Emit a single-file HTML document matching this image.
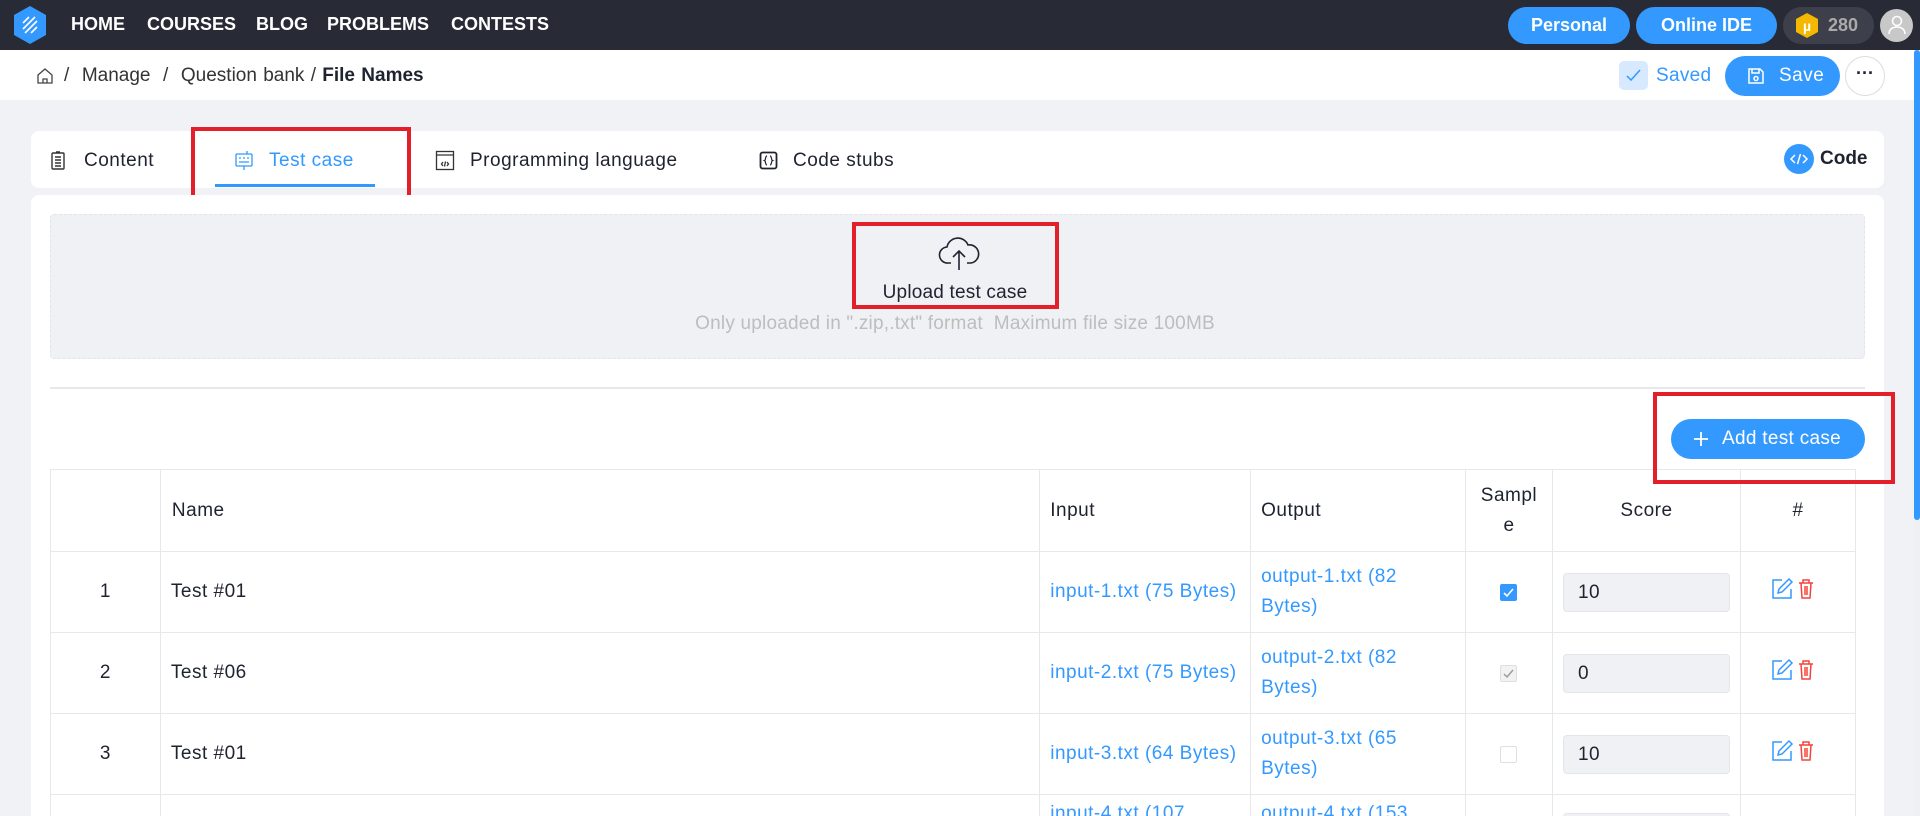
<!DOCTYPE html>
<html style="height:816px;overflow:hidden"><head><meta charset="utf-8"><style>
*{box-sizing:border-box;margin:0;padding:0}
body{width:1920px;height:816px;overflow:hidden;background:#f0f2f5;font-family:"Liberation Sans",sans-serif;font-size:19px;letter-spacing:0.5px;color:#1f2330;position:relative}
.a{position:absolute}
.nav{left:0;top:0;width:1920px;height:50px;background:#282b36;letter-spacing:0}
.nav .m{top:14px;color:#fff;font-weight:bold;font-size:18px}
.pill{background:#3399ff;color:#fff;font-weight:bold;border-radius:20px;height:37px;top:7px;display:flex;align-items:center;justify-content:center;font-size:18px}
.bc{left:0;top:50px;width:1914px;height:50px;background:#fff}
.card{background:#fff;border-radius:8px}
.tab{top:150px;color:#1f2330}
.red{border:4px solid #e3202a}
table{border-collapse:collapse;position:absolute;left:19px;top:274px;width:1806px;border:1px solid #e6e8ec}
td,th{border:1px solid #e6e8ec;height:81px;vertical-align:middle;text-align:left;padding:0 10px;font-weight:normal}
th{height:82px}
.blue{color:#3399ff}
.inp{width:167px;height:39px;background:#f0f1f5;border:1px solid #e3e5ea;border-radius:4px;padding:8px 14px}
.cb{width:17px;height:17px;border:1px solid #dcdfe6;border-radius:2px;margin:auto;display:flex;align-items:center;justify-content:center}
</style></head><body>
<div class="a nav">
 <svg class="a" style="left:12px;top:5px" width="36" height="40" viewBox="0 0 36 40"><path d="M18 1 L34 10 V30 L18 39 L2 30 V10Z" fill="#3399ff"/><path d="M11 18l6-6M11 24l12-12M13 28l12-12M19 28l6-6" stroke="#fff" stroke-width="1.6"/></svg>
 <div class="a m" style="left:71px">HOME</div>
 <div class="a m" style="left:147px">COURSES</div>
 <div class="a m" style="left:256px">BLOG</div>
 <div class="a m" style="left:327px">PROBLEMS</div>
 <div class="a m" style="left:451px">CONTESTS</div>
 <div class="a pill" style="left:1508px;width:122px">Personal</div>
 <div class="a pill" style="left:1636px;width:141px">Online IDE</div>
 <div class="a" style="left:1783px;top:7px;width:91px;height:37px;background:#3d404a;border-radius:20px"></div>
 <svg class="a" style="left:1795px;top:12px" width="24" height="27" viewBox="0 0 24 27"><path d="M12 1L23 7V20L12 26L1 20V7Z" fill="#f5b800"/><text x="12" y="19" font-size="14" font-weight="bold" fill="#fff" text-anchor="middle" font-family="Liberation Sans">µ</text></svg>
 <div class="a" style="left:1828px;top:15px;color:#aaa;font-weight:bold;font-size:18px">280</div>
 <div class="a" style="left:1880px;top:9px;width:33px;height:33px;border-radius:50%;background:#c8c8c8"></div>
 <svg class="a" style="left:1886px;top:14px" width="22" height="22" viewBox="0 0 22 22" fill="none" stroke="#fff" stroke-width="1.6"><circle cx="11" cy="7" r="4.5"/><path d="M3 20c0-5 4-7 8-7s8 2 8 7"/></svg>
</div>
<div class="a" style="left:1914px;top:50px;width:6px;height:766px;background:#eef0f3"></div>
<div class="a" style="left:1914px;top:50px;width:6px;height:470px;background:#3399ff;border-radius:3px"></div>
<div class="a bc">
 <svg class="a" style="left:36px;top:17px" width="18" height="18" viewBox="0 0 18 18" fill="none" stroke="#444" stroke-width="1.3"><path d="M2 8L9 2l7 6v8H2z"/><path d="M7 16v-4h4v4"/></svg>
 <div class="a" style="left:64px;top:15px;color:#333;letter-spacing:0;word-spacing:1px">/ &nbsp;Manage &nbsp;/ &nbsp;Question bank / <b style="color:#1f2330">File Names</b></div>
 <div class="a" style="left:1619px;top:11px;width:29px;height:29px;background:#d6e9ff;border-radius:5px"></div>
 <svg class="a" style="left:1624px;top:16px" width="19" height="19" viewBox="0 0 19 19" fill="none" stroke="#3399ff" stroke-width="1.5"><path d="M3 10l4 4 9-10"/></svg>
 <div class="a" style="left:1656px;top:15px;color:#3399ff;letter-spacing:0.3px">Saved</div>
 <div class="a" style="left:1725px;top:6px;width:115px;height:40px;background:#3399ff;border-radius:20px;color:#fff;display:flex;align-items:center;padding-left:54px">Save</div>
 <svg class="a" style="left:1747px;top:17px" width="18" height="18" viewBox="0 0 18 18" fill="none" stroke="#fff" stroke-width="1.5"><path d="M2 2h11l3 3v11H2z"/><path d="M5 2v4h7V2"/><circle cx="9" cy="11.5" r="2"/></svg>
 <div class="a" style="left:1845px;top:6px;width:40px;height:40px;border:1px solid #ddd;border-radius:50%;text-align:center;line-height:32px;font-weight:bold;font-size:18px;letter-spacing:0">···</div>
</div>
<div class="a card" style="left:31px;top:131px;width:1853px;height:57px"></div>
<svg class="a" style="left:50px;top:151px" width="16" height="19" viewBox="0 0 16 19" fill="none" stroke="#333" stroke-width="1.4"><rect x="2" y="2" width="12" height="16" rx="1"/><path d="M5 6h6M5 9h6M5 12h6M5 15h6M6 1h4"/></svg>
<div class="a tab" style="left:84px">Content</div>
<svg class="a" style="left:234px;top:150px" width="20" height="22" viewBox="0 0 20 22" fill="none" stroke="#3399ff" stroke-width="1.3"><rect x="2" y="4" width="16" height="12" rx="1"/><path d="M5 8h2M9 8h2M13 8h2M5 12h10M10 16v4M13 1v3"/></svg>
<div class="a tab" style="left:269px;color:#3399ff">Test case</div>
<div class="a" style="left:215px;top:184px;width:160px;height:3px;background:#3399ff"></div>
<svg class="a" style="left:435px;top:150px" width="20" height="21" viewBox="0 0 20 21" fill="none" stroke="#333" stroke-width="1.3"><rect x="1.5" y="1.5" width="17" height="18"/><path d="M1.5 5h17M8 16l-1.5-2 1.5-2M12 12l1.5 2-1.5 2M10.5 11.5l-1 5"/></svg>
<div class="a tab" style="left:470px">Programming language</div>
<svg class="a" style="left:759px;top:151px" width="19" height="19" viewBox="0 0 19 19" fill="none" stroke="#1f2330" stroke-width="1.8"><rect x="1.5" y="1.5" width="16" height="16" rx="2"/><path d="M8 5c-2 0-1 4-2.5 4.5C7 10 6 14 8 14M11 5c2 0 1 4 2.5 4.5C12 10 13 14 11 14" stroke-width="1.2"/></svg>
<div class="a tab" style="left:793px">Code stubs</div>
<div class="a" style="left:1784px;top:144px;width:30px;height:30px;border-radius:50%;background:#3399ff"></div>
<svg class="a" style="left:1789px;top:149px" width="20" height="20" viewBox="0 0 20 20" fill="none" stroke="#fff" stroke-width="1.5"><path d="M6 6l-4 4 4 4M14 6l4 4-4 4M11.5 5l-3 10"/></svg>
<div class="a" style="left:1820px;top:148px;font-size:19px;font-weight:bold;color:#1f2330;letter-spacing:0">Code</div>
<div class="a red" style="left:191px;top:127px;width:220px;height:94px"></div>

<div class="a card" style="left:31px;top:195px;width:1853px;height:621px;overflow:hidden;border-radius:8px 8px 0 0">
<table>
<tr><th style="width:110px"></th><th style="width:880px;padding-left:11px">Name</th><th style="width:211px">Input</th><th style="width:215px">Output</th><th style="width:87px;text-align:center;line-height:30px">Sampl<br>e</th><th style="width:188px;text-align:center">Score</th><th style="width:115px;text-align:center">#</th></tr>
<tr><td style="text-align:center">1</td><td>Test #01</td><td class="blue">input-1.txt (75 Bytes)</td><td class="blue" style="line-height:30px">output-1.txt (82<br>Bytes)</td><td><div class="cb" style="background:#3399ff;border-color:#3399ff"><svg width="13" height="13" viewBox="0 0 13 13" fill="none" stroke="#fff" stroke-width="1.6"><path d="M2 7l3 3 6-7"/></svg></div></td><td><div class="inp">10</div></td><td style="text-align:center"><svg width="56" height="24" viewBox="14 0 56 24" fill="none" stroke-width="1.5"><g stroke="#3399ff"><path d="M26 3h-9v18h18v-9"/><path d="M22 16l1-4 10-10 3 3-10 10z"/></g><g stroke="#f5423a"><path d="M43 6h14M47 6V3h6v3M45 6l1 15h8l1-15M49 9v9M51 9v9"/></g></svg></td></tr>
<tr><td style="text-align:center">2</td><td>Test #06</td><td class="blue">input-2.txt (75 Bytes)</td><td class="blue" style="line-height:30px">output-2.txt (82<br>Bytes)</td><td><div class="cb" style="background:#f2f2f2"><svg width="13" height="13" viewBox="0 0 13 13" fill="none" stroke="#999" stroke-width="1.4"><path d="M2 7l3 3 6-7"/></svg></div></td><td><div class="inp">0</div></td><td style="text-align:center"><svg width="56" height="24" viewBox="14 0 56 24" fill="none" stroke-width="1.5"><g stroke="#3399ff"><path d="M26 3h-9v18h18v-9"/><path d="M22 16l1-4 10-10 3 3-10 10z"/></g><g stroke="#f5423a"><path d="M43 6h14M47 6V3h6v3M45 6l1 15h8l1-15M49 9v9M51 9v9"/></g></svg></td></tr>
<tr><td style="text-align:center">3</td><td>Test #01</td><td class="blue">input-3.txt (64 Bytes)</td><td class="blue" style="line-height:30px">output-3.txt (65<br>Bytes)</td><td><div class="cb"></div></td><td><div class="inp">10</div></td><td style="text-align:center"><svg width="56" height="24" viewBox="14 0 56 24" fill="none" stroke-width="1.5"><g stroke="#3399ff"><path d="M26 3h-9v18h18v-9"/><path d="M22 16l1-4 10-10 3 3-10 10z"/></g><g stroke="#f5423a"><path d="M43 6h14M47 6V3h6v3M45 6l1 15h8l1-15M49 9v9M51 9v9"/></g></svg></td></tr>
<tr><td></td><td></td><td class="blue" style="vertical-align:top;padding-top:8px">input-4.txt (107</td><td class="blue" style="vertical-align:top;padding-top:8px">output-4.txt (153</td><td></td><td style="vertical-align:top"><div class="inp" style="margin-top:18px"></div></td><td></td></tr>
</table>
</div>
<div class="a" style="left:50px;top:214px;width:1815px;height:145px;background:#f0f1f5;border:1px dashed #e3e5ea;border-radius:4px"></div>
<svg class="a" style="left:938px;top:236px" width="42" height="36" viewBox="0 0 42 36" fill="none" stroke="#1f2330" stroke-width="1.6"><path d="M13 27H10a8 8 0 0 1-1-16 11 11 0 0 1 21-2 8 8 0 0 1 3 18h-4"/><path d="M21 34V15M15 21l6-6 6 6"/></svg>
<div class="a" style="width:1920px;text-align:center;top:282px;left:-5px;color:#1f2330;letter-spacing:0.2px">Upload test case</div>
<div class="a" style="width:1920px;text-align:center;top:313px;left:-5px;color:#bdbdbd;letter-spacing:0.2px">Only uploaded in ".zip,.txt" format &nbsp;Maximum file size 100MB</div>
<div class="a red" style="left:852px;top:222px;width:207px;height:87px"></div>
<div class="a" style="left:50px;top:387px;width:1815px;height:2px;background:#e6e8ec"></div>
<div class="a" style="left:1671px;top:419px;width:194px;height:40px;background:#3399ff;border-radius:20px;color:#fff;display:flex;align-items:center;padding-left:51px;letter-spacing:0.3px">Add test case</div>
<svg class="a" style="left:1692px;top:430px" width="18" height="18" viewBox="0 0 18 18" stroke="#fff" stroke-width="1.8"><path d="M9 2v14M2 9h14"/></svg>
<div class="a red" style="left:1653px;top:392px;width:242px;height:92px"></div>
</body></html>
